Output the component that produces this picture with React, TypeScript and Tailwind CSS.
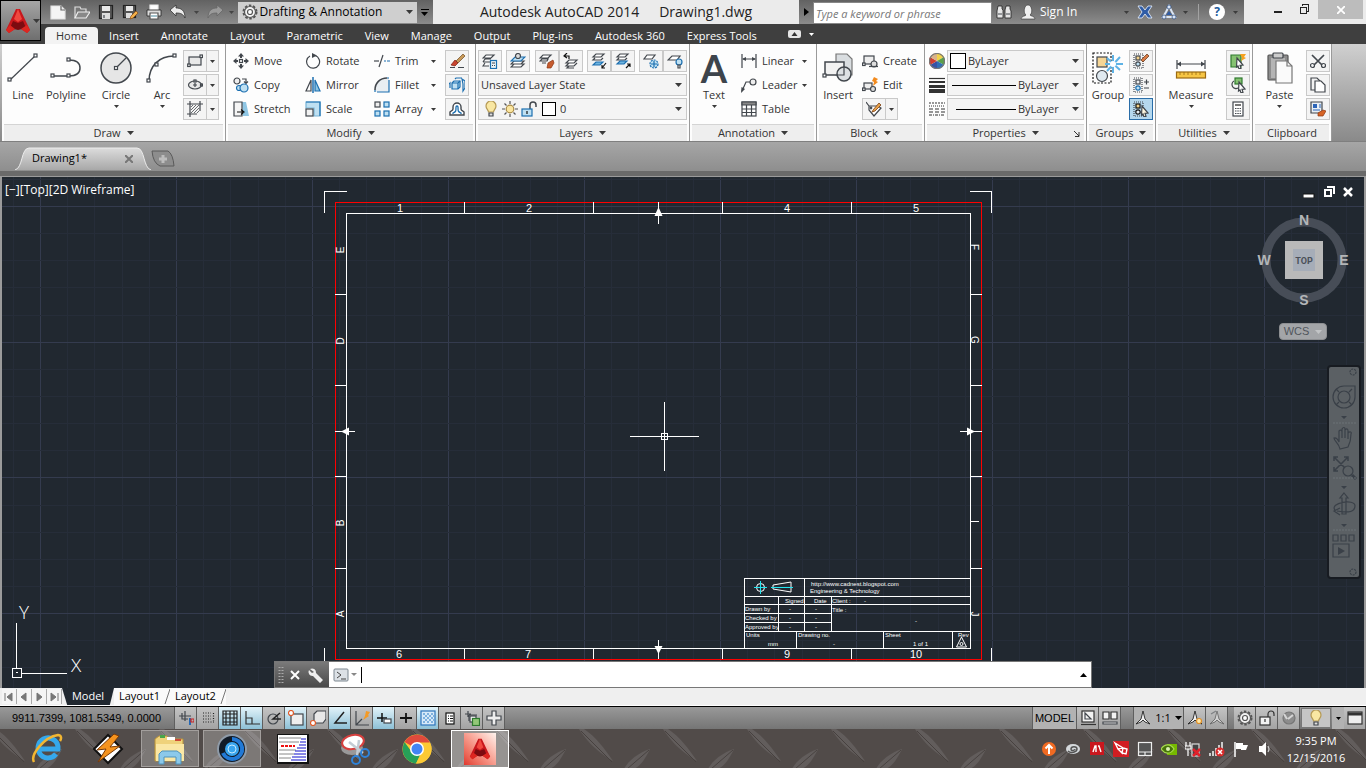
import React from 'react'

type Kids = { children?: React.ReactNode }

// Icon shell: 16 unit grid unless told otherwise
function Ico({ size = 16, box = 16, className = '', children }: Kids & { size?: number; box?: number; className?: string }) {
  return (
    <svg
      width={size}
      height={size}
      viewBox={`0 0 ${box} ${box}`}
      fill="none"
      stroke="#42474d"
      strokeWidth="1.2"
      className={`shrink-0 ${className}`}
      aria-hidden="true"
    >
      {children}
    </svg>
  )
}

function Caret({ className = 'text-[#3a3a3a]', w = 5 }: { className?: string; w?: number }) {
  return (
    <svg width={w} height={w === 5 ? 3 : 4} viewBox="0 0 8 5" preserveAspectRatio="none" className={`shrink-0 ${className}`} aria-hidden="true">
      <path d="M0 0H8L4 5Z" fill="currentColor" />
    </svg>
  )
}

const blue = '#1c6fb0'
const pale = '#bfe0f2'

const icons: Record<string, React.ReactNode> = {
  move: <g stroke="none" fill="#42474d"><path d="M8 0l3 3.500H9V5H7V3.500H5zM8 16l3-3.500H9V11H7v1.500H5zM0 8l3.500-3v2H5v2H3.500v2zM16 8l-3.500-3v2H11v2h1.500v2z" /><rect x="6.500" y="6.500" width="3" height="3" fill="#fff" stroke="#42474d" /></g>,
  copy: <><circle cx="4" cy="4" r="3" fill="#eee" /><path d="M9 2h4v4M11 4.500l2 2 2-2" /><circle cx="6" cy="11" r="2.500" fill={pale} stroke={blue} /><circle cx="11" cy="11" r="4" fill={pale} stroke={blue} /></>,
  stretch: <><path d="M9 1h4l3 14h-6z" fill="#8fc6e4" stroke="none" /><path d="M1 1h8v14H1z" fill="#f5f5f5" /><path d="M4 11h6M8 8.500l3 2.500-3 2.500" stroke="#111" /></>,
  rotate: <><path d="M10 2.500a6.500 6.500 0 1 1-5 .5" /><path d="M7 0l5 2.500L7 5z" fill="#42474d" stroke="none" /></>,
  mirror: <><path d="M6 3v11H1z" /><path d="M8 0v16" stroke={blue} strokeWidth="1.500" /><path d="M10 3v11h5z" fill="#8fc6e4" stroke={blue} /></>,
  scale: <><path d="M1 1h14v14H9V7H1z" fill={pale} stroke="#78b4d6" /><path d="M1 1h14v14" stroke={blue} /><rect x="1" y="8" width="7" height="7" fill="#f2f2f2" /></>,
  trim: <><path d="M0 8h5" /><path d="M10 8h2M13 8h3" stroke={blue} /><path d="M9 2L5 14" /></>,
  fillet: <><path d="M1 15C1 6 6 1 15 1v14z" fill="#e9eef2" stroke="none" /><path d="M1 15V13M15 1h-2M15 3v12H3" stroke={blue} /><path d="M1 13C1 6 6 1 13 1" strokeWidth="1.600" /></>,
  array: <><rect x="1" y="1" width="5" height="5" fill="#eee" /><g stroke={blue} fill={pale}><rect x="10" y="1" width="5" height="5" /><rect x="1" y="10" width="5" height="5" /><rect x="10" y="10" width="5" height="5" /></g></>,
  erase: <><path d="M7 8l7-7 2 2-7 7z" fill="#c89a5a" stroke="#6d4b23" strokeWidth=".7" /><path d="M2 12l4-5 3 3-3 3z" fill="#c8432d" stroke="#7c1f12" strokeWidth=".7" /><path d="M1 14.500h5M9 14.500h6" /></>,
  explode: <g stroke={blue}><path d="M3 6l2-2h6v6l-2 2H3z" fill={pale} /><path d="M3 6h6v6M9 6l2-2M0 7l1-1v5M13 2l3 2v7l-2 3V7zM6 2l1-1h6" fill="none" /></g>,
  offset: <><path d="M1 14v-3c0-1 3-1 3-3V6a4 4 0 0 1 8 0v2c0 2 3 2 3 3v3z" strokeWidth="1.400" fill="#fff" /><path d="M4 13v-1c3-1 3-2 3-6a1 1 0 0 1 2 0c0 4 0 5 3 6v1" stroke={blue} strokeWidth="1.300" /></>,
  rect: <><rect x="2" y="4" width="12" height="8" fill="#e8e8e8" /><rect x="0.700" y="11" width="2.500" height="2.500" fill="#fff" /><rect x="13" y="2" width="2.500" height="2.500" fill="#fff" /></>,
  ellipse: <><ellipse cx="8" cy="8" rx="6.500" ry="4" fill="#e8e8e8" /><path d="M8 6v4M6 8h4" /><rect x="7" y="3" width="2" height="2" fill="#fff" /><rect x="13.500" y="7" width="2" height="2" fill="#fff" /></>,
  hatch: <><path d="M3 0v16M0 3h16M13 0v10M0 13h10" /><path d="M4 6l2-2M4 9l5-5M4 12l8-8M7 12l5-5M10 12l2-2" strokeWidth=".8" /></>,
  layerProps: <><path d="M4 2h8L9 5H1zM3 6h6M1 9h7M3 6L1 9M3 10L1 13h6" fill="#fff" /><rect x="8.500" y="7.500" width="6" height="8" fill="#eaf3f9" stroke={blue} /><path d="M10 10h3M10 12.500h1M12 12.500h1" /></>,
  layerMake: <><path d="M4 8h10l-3 3H1zM4 11h10l-3 3H1z" fill="#fff" /><path d="M5 4h10l-4 4H1z" fill={pale} stroke={blue} /><circle cx="8" cy="3" r="2.500" fill="#ddd" /></>,
  layerMatch: <><path d="M4 2h8L9 5H1zM3 6h6L8 8H1zM3 10h4" fill="#fff" /><path d="M9 10l5-3 1 3-3 5-4 0z" fill="#c65b2e" stroke="#8c3713" strokeWidth=".7" /></>,
  layerPrev: <><path d="M6 7h8l-3 3H3zM6 10l-3 3h8l3-3M6 13l-2 2h7" fill="#fff" /><path d="M1 3h5v3M4 0L1 3l3 2" stroke="#111" /></>,
  layerIso: <><path d="M5 1h8l-3 3H2zM4 5l-2 2h8l2-2" fill="#fff" /><path d="M5 9h7l-3 3H2z" fill="#6fb5e0" stroke={blue} /><path d="M15 10l-4 5M11 12v3h3" stroke="#111" /></>,
  layerUniso: <><path d="M5 1h8l-3 3H2zM4 5l-2 2h8l2-2" fill="#fff" /><path d="M5 8h7l-3 3H2z" fill="#6fb5e0" stroke={blue} /><path d="M11 15l4-4M12 11h3v3" stroke="#111" /></>,
  layerFreeze: <><path d="M4 2h8L9 6H1z" fill="#fff" /><g stroke={blue}><circle cx="11" cy="11" r="4" fill={pale} strokeDasharray="2 1" /><path d="M11 8v6M8 11h6" /></g></>,
  layerOff: <><path d="M5 3h8l-3 4H1z" fill="#fff" /><circle cx="12" cy="9" r="3" fill={pale} stroke={blue} /><path d="M11 12h2v3h-2z" fill="#fff" /></>,
  bulb: <><path d="M5.500 11C5.500 9 3 8 3 5a5 5 0 0 1 10 0c0 3-2.500 4-2.500 6z" fill="#f9e7a2" stroke="#b59a55" /><path d="M6 12h4v3H6z" fill="#ddd" /></>,
  sun: <><g stroke="#555"><path d="M8 0v3M8 13v3M0 8h3M13 8h3M2.500 2.500l2 2M11.500 11.500l2 2M13.500 2.500l-2 2M4.500 11.500l-2 2" /></g><circle cx="8" cy="8" r="3.800" fill="#fbe6a0" stroke="#a98b45" /></>,
  unlock: <><path d="M9 8V4a3 3 0 0 1 6 0v2" strokeWidth="1.500" /><rect x="1" y="8" width="10" height="7" fill={pale} stroke={blue} /><path d="M6 10v3" stroke="#111" /></>,
  linear: <><path d="M1 1v14M15 1v14M2 6h12" /><path d="M1 6l4-2v4zM15 6l-4-2v4z" fill="#42474d" stroke="none" /></>,
  leader: <><path d="M1 14L5 5h4" /><circle cx="12" cy="5" r="3" fill="#eee" /><path d="M0 16l.5-6 3.500 2z" fill="#42474d" stroke="none" /></>,
  table: <><rect x="1" y="1" width="14" height="14" fill="#fff" /><path d="M1 1h14v3H1z" fill="#888" /><path d="M1 8h14M1 11.500h14M5.500 4v11M10.500 4v11" /></>,
  create: <><rect x="2" y="3" width="10" height="8" fill="#eee" /><rect x="0.600" y="10" width="2.500" height="2.500" fill="#fff" /><circle cx="12" cy="11" r="3" fill="#ddd" /><path d="M7 13.500h9" /></>,
  edit: <><rect x="2" y="6" width="8" height="6" fill="#eee" /><rect x="0.600" y="11" width="2.500" height="2.500" fill="#fff" /><circle cx="11" cy="12" r="2.500" fill="#ddd" /><path d="M12 0l4 2-2 2 2 1-5 4 1-4-2-1z" fill="#f28a1d" stroke="none" /></>,
  attr: <><path d="M0 1l3 4h9l3 2-7 8-5-6V5" fill="#fff" /><path d="M7 9l6-7 2 2-6 6-3 1z" fill="#e8a24a" stroke="#7a3c10" strokeWidth=".8" /><circle cx="5" cy="7" r=".8" /></>,
  wheel: <g stroke="none"><path d="M8 8V0a8 8 0 0 1 7 4z" fill="#f0d24a" /><path d="M8 8l7-4a8 8 0 0 1 0 8z" fill="#5aa04b" /><path d="M8 8l7 4a8 8 0 0 1-7 4z" fill="#2f6fb5" /><path d="M8 8v8a8 8 0 0 1-7-4z" fill="#3653a5" /><path d="M8 8l-7 4a8 8 0 0 1 0-8z" fill="#cf3f30" /><path d="M8 8L1 4a8 8 0 0 1 7-4z" fill="#d9b38a" /><circle cx="8" cy="8" r="7.500" stroke="#777" /></g>,
  weights: <g stroke="#333"><path d="M0 1.500h16" /><path d="M0 5h16" strokeWidth="2" /><path d="M0 9.500h16" strokeWidth="3" /><path d="M0 14h16" strokeWidth="4" /></g>,
  ltypes: <g stroke="#333"><path d="M0 2h16" strokeDasharray="2 1" /><path d="M0 5h16" strokeDasharray="1 1" /><path d="M0 8h16M0 11h16" strokeDasharray="4 2" /><path d="M0 14h16" strokeDasharray="3 1 1 1" /></g>,
  ungroup: <><path d="M1 1h9v14H1z" strokeDasharray="1 1" /><rect x="3" y="3" width="4" height="4" fill="#f3d28c" /><circle cx="5" cy="11" r="2.200" fill={pale} /><path d="M8 7l6-6 2 2-6 6z" fill="#d87a45" stroke="#5c3214" strokeWidth=".7" /></>,
  groupEdit: <><path d="M1 1h8v14H1z" strokeDasharray="1 1" /><rect x="3" y="3" width="4" height="4" fill="#eee" /><circle cx="5" cy="11" r="2.200" fill={pale} stroke={blue} /><path d="M11 5h5M13.500 2.500v5M11 11h5" /></>,
  groupSel: <><path d="M1 1h9v14H1z" strokeDasharray="1 1" /><rect x="3" y="3" width="4" height="4" fill="#f3d28c" stroke="#111" /><circle cx="5" cy="11" r="2.200" fill="#e8eef2" stroke="#111" /><path d="M9 5l6 7-3 .3 1 3-2 .7-1-3-1.500 1z" fill="#fff8e0" /></>,
  quickSel: <><path d="M1 2h10v12H1z" fill="#85c171" stroke="#2f7a2f" /><path d="M10 1l6 0-2 3 2 1-5 3 1-3z" fill="#f6a21f" stroke="none" /><path d="M7 5l6 7-3 .3 1 3-2 .7-1-3-1.500 1z" fill="#fff" /></>,
  selectAll: <><rect x="5" y="1" width="7" height="6" fill="#85c171" stroke="#2f7a2f" /><path d="M4 4a4 4 0 1 0 4 7" /><path d="M9 5l6 7-3 .3 1 3-2 .7-1-3-1.500 1z" fill="#fff" /></>,
  calc: <><rect x="3" y="1" width="10" height="14" fill="#fff" /><rect x="5" y="3" width="6" height="2" fill="#777" stroke="none" /><path d="M5 7.500h6M5 10h6M5 12.500h6" strokeDasharray="1.500 .8" /></>,
  cut: <><path d="M2 2l10 10M14 2L4 12" strokeWidth="1.700" /><circle cx="2.500" cy="12.500" r="2" /><circle cx="13.500" cy="12.500" r="2" /></>,
  copyClip: <><path d="M1 1h6l3 3v9H1z" fill="#f2f2f2" /><path d="M5 4h6l4 4v7H5z" fill="#fff" /></>,
  matchProps: <><path d="M1 1h11v11H1z" fill="#e9eff5" /><rect x="3" y="3" width="4" height="4" fill="#2b64b8" stroke="none" /><path d="M9 4h2M9 6h2M3 9h7" stroke="#2b64b8" /><path d="M8 12l5-3 3 1-3 5-5 0z" fill="#d76427" stroke="#8c3713" strokeWidth=".7" /></>,
  qnew: <><path d="M1 2h10l4 4v9H1z" fill="#f4f4f4" stroke="#e2e2e2" /><path d="M11 2v4h4" stroke="#666" /></>,
  qopen: <><path d="M1 14V3h5l1 2h5v3" fill="#777" stroke="#ddd" /><path d="M4 8h12l-4 6H1z" fill="#888" stroke="#eee" /></>,
  qsave: <><rect x="1.500" y="1.500" width="13" height="13" fill="#555" stroke="#222" /><rect x="4" y="2" width="8" height="5" fill="#e8e8e8" stroke="none" /><rect x="4" y="9" width="8" height="6" fill="#ddd" stroke="none" /><path d="M6 11v3" /></>,
  qsaveas: <><rect x="1.500" y="1.500" width="12" height="12" fill="#555" stroke="#222" /><rect x="4" y="2" width="7" height="5" fill="#e8e8e8" stroke="none" /><rect x="4" y="9" width="6" height="5" fill="#ddd" stroke="none" /><path d="M8 15l1-3 5-5 2 2-5 5z" fill="#f2b04a" stroke="#8a4a12" strokeWidth=".7" /></>,
  qprint: <><path d="M4 1h8v5H4z" fill="#fff" stroke="#eee" /><path d="M1 6h14v6H1z" fill="#ddd" stroke="#222" strokeWidth=".8" /><path d="M4 9h8v6H4z" fill="#fff" stroke="#555" /><path d="M5 12h6" stroke="#69a" /></>,
  qundo: <path d="M0 6l6-5v3c5 0 9 2 9 10-2-4-4-5-9-5v3z" fill="#ececec" stroke="#333" strokeWidth=".8" />,
  qredo: <path d="M16 6l-6-5v3C5 4 1 6 1 14c2-4 4-5 9-5v3z" fill="#9a9a9a" stroke="#666" strokeWidth=".8" />,
  gear: <><circle cx="8" cy="8" r="6.500" stroke="#555" strokeWidth="2" strokeDasharray="2.500 1.600" /><circle cx="8" cy="8" r="5.500" fill="#f2f2f2" stroke="#555" /><circle cx="8" cy="8" r="2.500" fill="#fff" stroke="#555" /></>,
}

const iconButton = 'flex h-[22px] w-6 items-center justify-center border border-[#c9c9c9] bg-[#f4f4f4]'

function IconButton({ name, active = false }: { name: string; active?: boolean }) {
  return (
    <button aria-label={name} className={active ? 'flex h-[22px] w-6 items-center justify-center border border-[#2a6da8] bg-[#b5d8ee]' : iconButton}>
      <Ico>{icons[name]}</Ico>
    </button>
  )
}

function SplitButton({ name }: { name: string }) {
  return (
    <div className="flex h-[22px] border border-[#c9c9c9] bg-[#f4f4f4]">
      <button aria-label={name} className="flex w-[23px] items-center justify-center border-r border-[#c9c9c9]"><Ico>{icons[name]}</Ico></button>
      <button aria-label={`${name} options`} className="flex w-[11px] items-center justify-center"><Caret /></button>
    </div>
  )
}

function RowButton({ name, label, caret = false }: { name: string; label: string; caret?: boolean }) {
  return (
    <button className="flex h-6 w-full items-center gap-[5px]">
      <Ico>{icons[name]}</Ico>
      <span>{label}</span>
      {caret && <span className="ml-auto"><Caret /></span>}
    </button>
  )
}

function BigButton({ label, caret = false, width, children }: Kids & { label: string; caret?: boolean; width: string }) {
  return (
    <button className={`flex h-[72px] flex-col items-center ${width}`}>
      <span className="flex h-[38px] items-center">{children}</span>
      <span className="leading-4">{label}</span>
      {caret && <span className="mt-0.5"><Caret /></span>}
    </button>
  )
}

function Panel({ title, width, caret = true, launcher = false, children }: Kids & { title: string; width: string; caret?: boolean; launcher?: boolean }) {
  return (
    <section className={`flex shrink-0 flex-col border-r border-[#9a9a9a] bg-[#fdfdfd] ${width}`}>
      <div className="flex h-20 pt-[5px]">{children}</div>
      <div className="relative mx-0.5 flex h-[17px] items-center justify-center gap-1.5 border-t border-[#d4d4d4] bg-[#eeeeee]">
        <span>{title}</span>
        {caret && <Caret w={7} />}
        {launcher && (
          <button aria-label="Properties palette" className="absolute right-1 top-1.5">
            <svg width="6" height="6" viewBox="0 0 6 6" stroke="#333" fill="none"><path d="M0 0l5 5M5 1v4.500H1" /></svg>
          </button>
        )}
      </div>
    </section>
  )
}

function Combo({ label, value, children }: Kids & { label: string; value: string }) {
  return (
    <div className="relative flex h-[22px] items-center border border-[#c9c9c9] bg-[#f4f4f4] pl-0.5">
      {children}
      <select aria-label={label} className="h-full min-w-0 flex-1 appearance-none bg-transparent outline-none">
        <option>{value}</option>
      </select>
      <span className="pointer-events-none absolute right-1"><Caret w={7} /></span>
    </div>
  )
}

function AutodeskA({ size }: { size: number }) {
  return (
    <svg width={size} height={size} viewBox="0 0 26 26" aria-hidden="true">
      <path d="M11 1h4l10 21-3 3-6-4H10l-6 4-3-3z" fill="#c8171c" />
      <path d="M13 1l4 10-4 3-4-3z" fill="#f0483f" />
      <path d="M8 13l5 2 5-2 3 7-8 2-8-2z" fill="#7c0b10" />
      <path d="M1 22l4-5 5 4-6 4zM25 22l-3-5-6 4 6 4z" fill="#dd2620" />
    </svg>
  )
}

function TitleBar() {
  const quick = ['qnew', 'qopen', 'qsave', 'qsaveas', 'qprint', 'qundo']
  return (
    <header className="flex h-6 bg-[#ebebeb]">
      <div className="flex w-[433px] shrink-0 items-center bg-linear-to-b from-[#626262] to-[#8c8c8c] pl-[50px]">
        {quick.map((name) => (
          <button key={name} aria-label={name.slice(1)} className="w-6">
            <Ico>{icons[name]}</Ico>
          </button>
        ))}
        <Caret className="mr-2 text-[#444]" />
        <button aria-label="Redo"><Ico>{icons.qredo}</Ico></button>
        <Caret className="ml-1.5 mr-1 text-[#444]" />
        <label className="relative flex h-[21px] w-[180px] items-center bg-[#cfcfcf] pl-1 text-xs text-black">
          <Ico>{icons.gear}</Ico>
          <select aria-label="Workspace" className="ml-0.5 min-w-0 flex-1 appearance-none outline-none">
            <option>Drafting &amp; Annotation</option>
          </select>
          <span className="pointer-events-none absolute right-1"><Caret w={7} /></span>
        </label>
        <button aria-label="Customize" className="flex w-4 flex-col items-center gap-0.5">
          <span className="h-px w-2 bg-black" />
          <Caret w={7} className="text-black" />
        </button>
      </div>
      <h1 className="flex flex-1 items-center justify-center gap-5 whitespace-pre text-sm text-[#222]">
        <span>Autodesk AutoCAD 2014</span>
        <span>Drawing1.dwg</span>
      </h1>
      <div className="flex w-[445px] shrink-0 items-center bg-linear-to-b from-[#626262] to-[#8c8c8c] text-white">
        <button aria-label="Expand search" className="flex w-[14px] justify-center"><svg width="5" height="8"><path d="M0 0l5 4-5 4z" fill="#000" /></svg></button>
        <input aria-label="Search" placeholder="Type a keyword or phrase" className="mt-0.5 h-[22px] w-[179px] border border-[#888] bg-white px-0.5 italic outline-none placeholder:text-[#777]" />
        <button aria-label="Find" className="ml-1 w-6">
          <Ico><path d="M2 2h4v3l1 1v8H1V7zM10 2h4v3l1 2v7H9V6z" fill="#e6e6e6" stroke="#222" strokeWidth=".8" /><path d="M2 10h4M10 10h4" /></Ico>
        </button>
        <button className="flex items-center gap-1 text-xs">
          <Ico><path d="M1 15c0-3 5-3 5-4C3 9 4 1 8 1s5 8 2 10c0 1 5 1 5 4z" fill="#f0f0f0" stroke="#333" strokeWidth=".6" /></Ico>
          Sign In
        </button>
        <Caret className="ml-auto text-[#3c3c3c]" />
        <button aria-label="Exchange" className="ml-2"><Ico><path d="M1 2h4l3 4 3-4h4l-4 6 4 6h-4l-3-4-3 4H1l4-6z" fill="#2f5ca6" stroke="#dfe8f5" strokeWidth=".9" /></Ico></button>
        <button aria-label="Stay connected" className="ml-2"><Ico><path d="M8 2l3 6 3 5H2l3-5z" stroke="#dbe6f5" strokeWidth="2" /><path d="M8 7l3 4H5z" fill="#2f5ca6" stroke="none" /><circle cx="8" cy="3" r="2" fill="#dbe6f5" stroke="#27497f" strokeWidth=".7" /><circle cx="3" cy="13" r="2" fill="#dbe6f5" stroke="#27497f" strokeWidth=".7" /><circle cx="13" cy="13" r="2" fill="#dbe6f5" stroke="#27497f" strokeWidth=".7" /></Ico></button>
        <Caret className="ml-1.5 text-[#3c3c3c]" />
        <span className="ml-2.5 h-4 w-px bg-[#a2a2a2]" />
        <button aria-label="Help" className="ml-2.5 flex size-4 items-center justify-center rounded-full bg-white text-xs font-bold text-[#225a9c]">?</button>
        <Caret className="ml-2 mr-1.5 text-[#3c3c3c]" />
      </div>
      <div className="flex w-[122px] shrink-0 items-start justify-end text-[#222]">
        <button aria-label="Minimize" className="mr-[17px] mt-[11px] h-0.5 w-2 bg-[#222]" />
        <button aria-label="Restore" className="mr-[9px] mt-1"><svg width="10" height="10" fill="none" stroke="#222" shapeRendering="crispEdges"><path d="M3 2V.5h6.500V7H8" /><rect x="1" y="3" width="6" height="6" /></svg></button>
        <button aria-label="Close" className="mr-[3px] flex h-[19px] w-[45px] items-center justify-center bg-[#bcbcbc]"><svg width="8" height="8" stroke="#fff" strokeWidth="1.800"><path d="M0 0l8 8M8 0L0 8" /></svg></button>
      </div>
    </header>
  )
}

const tabs = ['Home', 'Insert', 'Annotate', 'Layout', 'Parametric', 'View', 'Manage', 'Output', 'Plug-ins', 'Autodesk 360', 'Express Tools']

function TabBar() {
  return (
    <nav className="flex h-5 items-end bg-[#3f3f3f] pl-[45px] text-white">
      {tabs.map((tab) => (
        <button key={tab} className={tab === 'Home' ? 'h-[17px] rounded-t-sm bg-[#f3f3f3] px-[11px] leading-4 text-[#333]' : 'h-[17px] px-[11px] leading-4'}>
          {tab}
        </button>
      ))}
      <button aria-label="Minimize ribbon" className="mb-1.5 ml-5 flex items-center gap-2">
        <svg width="13" height="8"><rect width="13" height="8" rx="2" fill="#e6e6e6" /><path d="M3.500 6l3-4 3 4z" fill="#333" /></svg>
        <Caret className="text-white" />
      </button>
    </nav>
  )
}

function Ribbon() {
  return (
    <div className="flex h-[98px] border-b border-[#7f7f7f] bg-linear-to-b from-[#d0d0d0] to-[#8a8a8a] pl-0.5 text-[#333]">
      <Panel title="Draw" width="w-[224px]">
        <BigButton label="Line" width="w-[42px]">
          <Ico size={32} box={32}><path d="M3 28L28 4" /><rect x="1" y="26" width="3" height="3" fill="#fff" /><rect x="27" y="2" width="3" height="3" fill="#fff" /></Ico>
        </BigButton>
        <BigButton label="Polyline" width="w-[44px]">
          <Ico size={32} box={32}><path d="M3 24h16c6 0 11-2 11-8s-4-8-11-8" strokeWidth="1.500" /><g fill="#fff"><rect x="1" y="22" width="3" height="3" /><rect x="17" y="22" width="3" height="3" /><rect x="17" y="6" width="3" height="3" /></g></Ico>
        </BigButton>
        <BigButton label="Circle" width="w-[56px]" caret>
          <Ico size={32} box={32}><circle cx="16" cy="16" r="15" fill="#e6e6e6" strokeWidth="1.500" /><path d="M16 16L26 6" /><rect x="14.500" y="14.500" width="3" height="3" fill="#fff" /></Ico>
        </BigButton>
        <BigButton label="Arc" width="w-9" caret>
          <Ico size={32} box={32}><path d="M3 29C3 14 13 4 28 4" strokeWidth="1.500" /><g fill="#fff"><rect x="1" y="27" width="3" height="3" /><rect x="9" y="11" width="3" height="3" /><rect x="27" y="2" width="3" height="3" /></g></Ico>
        </BigButton>
        <div className="ml-[3px] flex flex-col gap-0.5 pt-px">
          <SplitButton name="rect" />
          <SplitButton name="ellipse" />
          <SplitButton name="hatch" />
        </div>
      </Panel>

      <Panel title="Modify" width="w-[250px]">
        <div className="ml-[7px] w-[72px]">
          <RowButton name="move" label="Move" />
          <RowButton name="copy" label="Copy" />
          <RowButton name="stretch" label="Stretch" />
        </div>
        <div className="w-[69px]">
          <RowButton name="rotate" label="Rotate" />
          <RowButton name="mirror" label="Mirror" />
          <RowButton name="scale" label="Scale" />
        </div>
        <div className="w-[62px]">
          <RowButton name="trim" label="Trim" caret />
          <RowButton name="fillet" label="Fillet" caret />
          <RowButton name="array" label="Array" caret />
        </div>
        <div className="ml-[9px] flex flex-col gap-0.5 pt-px">
          <IconButton name="erase" />
          <IconButton name="explode" />
          <IconButton name="offset" />
        </div>
      </Panel>

      <Panel title="Layers" width="w-[214px]">
        <div className="mx-0.5 flex flex-1 flex-col gap-0.5 pt-px">
          <div className="flex justify-between">
            <IconButton name="layerProps" />
            <IconButton name="layerMake" />
            <div className="flex"><IconButton name="layerMatch" /><IconButton name="layerPrev" /></div>
            <div className="flex"><IconButton name="layerIso" /><IconButton name="layerUniso" /></div>
            <div className="flex"><IconButton name="layerFreeze" /><IconButton name="layerOff" /></div>
          </div>
          <Combo label="Layer state" value="Unsaved Layer State" />
          <Combo label="Layer" value="0">
            <span className="mr-1 flex items-center gap-[3px] pl-0.5">
              <Ico>{icons.bulb}</Ico>
              <Ico>{icons.sun}</Ico>
              <Ico>{icons.unlock}</Ico>
              <span className="ml-0.5 size-3.5 border border-black bg-white" />
            </span>
          </Combo>
        </div>
      </Panel>

      <Panel title="Annotation" width="w-[127px]">
        <BigButton label="Text" width="w-[48px]" caret>
          <span className="font-['Lato'] text-[38px] font-bold leading-9 text-[#3d444c]">A</span>
        </BigButton>
        <div className="ml-[3px] w-[66px]">
          <RowButton name="linear" label="Linear" caret />
          <RowButton name="leader" label="Leader" caret />
          <RowButton name="table" label="Table" />
        </div>
      </Panel>

      <Panel title="Block" width="w-[108px]">
        <BigButton label="Insert" width="w-[42px]">
          <Ico size={32} box={32}><path d="M14 2h11l5 5v16H14z" fill="#d9dde0" stroke="#777" /><path d="M3 10h19v13H3z" fill="#f2f2f2" strokeWidth="1.500" /><circle cx="22" cy="22" r="7" fill="#dde1e4" strokeWidth="1.500" /><path d="M22 15v8h-7" /><rect x="1" y="22" width="3" height="3" fill="#fff" /></Ico>
        </BigButton>
        <div className="ml-[3px] w-14">
          <RowButton name="create" label="Create" />
          <RowButton name="edit" label="Edit" />
          <div className="flex pt-px"><SplitButton name="attr" /></div>
        </div>
      </Panel>

      <Panel title="Properties" width="w-[162px]" launcher>
        <div className="ml-1 flex w-[18px] flex-col gap-2 pt-1">
          <Ico>{icons.wheel}</Ico>
          <Ico>{icons.weights}</Ico>
          <Ico>{icons.ltypes}</Ico>
        </div>
        <div className="mr-0.5 flex flex-1 flex-col gap-0.5 pt-px">
          <Combo label="Object color" value="ByLayer"><span className="mr-0.5 size-4 border border-black bg-white" /></Combo>
          <Combo label="Lineweight" value="ByLayer"><span className="mx-0.5 h-px w-16 bg-black" /></Combo>
          <Combo label="Linetype" value="ByLayer"><span className="ml-1.5 mr-0.5 h-px w-[60px] bg-black" /></Combo>
        </div>
      </Panel>

      <Panel title="Groups" width="w-[69px]">
        <BigButton label="Group" width="w-[42px]">
          <Ico size={32} box={32}><path d="M1 1h18v30H1z" stroke="#111" strokeDasharray="2 1.500" /><rect x="5" y="5" width="10" height="10" fill="#f5d595" /><circle cx="10" cy="24" r="5.500" fill="#dfe9f0" /><path d="M21 3v18M13 12h18M15 6l13 12M28 5L15 19" stroke="#5db3e6" strokeWidth="2" /><circle cx="21" cy="12" r="3" fill="#fff" stroke="none" /></Ico>
        </BigButton>
        <div className="flex flex-col gap-0.5 pt-px">
          <IconButton name="ungroup" />
          <IconButton name="groupEdit" />
          <IconButton name="groupSel" active />
        </div>
      </Panel>

      <Panel title="Utilities" width="w-[97px]">
        <BigButton label="Measure" width="w-[70px]" caret>
          <Ico size={32} box={32}><path d="M2 8v9M30 8v9M2 12h28" /><path d="M2 12l4-2.500v5zM30 12l-4-2.500v5z" fill="#42474d" stroke="none" /><rect x="1.500" y="20" width="29" height="6" fill="#f6c544" stroke="#9b6a12" /><path d="M5 20v3M9 20v3M13 20v3M17 20v3M21 20v3M25 20v3" stroke="#9b6a12" strokeWidth=".8" /></Ico>
        </BigButton>
        <div className="flex flex-col gap-0.5 pt-px">
          <IconButton name="quickSel" />
          <IconButton name="selectAll" />
          <IconButton name="calc" />
        </div>
      </Panel>

      <Panel title="Clipboard" width="w-[79px]" caret={false}>
        <BigButton label="Paste" width="w-[53px]" caret>
          <Ico size={32} box={32}><rect x="4" y="3" width="20" height="25" rx="1" fill="#8d8d8d" stroke="#555" /><rect x="7" y="6" width="14" height="20" fill="#b4b4b4" stroke="none" /><rect x="9" y="1" width="10" height="5" rx="1" fill="#ccc" /><path d="M12 9h11l5 5v17H12z" fill="#fafafa" stroke="#777" /><path d="M23 9v5h5" stroke="#777" /></Ico>
        </BigButton>
        <div className="flex flex-col gap-0.5 pt-px">
          <IconButton name="cut" />
          <IconButton name="copyClip" />
          <IconButton name="matchProps" />
        </div>
      </Panel>
    </div>
  )
}

function FileTabs() {
  return (
    <div className="h-[34px] border-b-[5px] border-[#6a6a6a] bg-linear-to-b from-[#a6a6a6] to-[#8e8e8e] pl-[15px] pt-[5px]">
      <div className="flex items-start">
        <div className="relative flex h-[23px] w-[136px] items-center pl-[17px] pr-[18px] text-black">
          <svg className="absolute inset-0 size-full" viewBox="0 0 136 23" preserveAspectRatio="none" aria-hidden="true">
            <defs>
              <linearGradient id="tab" x2="0" y2="1"><stop stopColor="#dcdcdc" /><stop offset="1" stopColor="#a8a8a8" /></linearGradient>
            </defs>
            <path d="M0 23C8 21 6 1 14 1H122C130 1 128 21 136 23" fill="url(#tab)" stroke="#ececec" />
          </svg>
          <a href="#drawing1" className="relative flex-1">Drawing1*</a>
          <button aria-label="Close drawing" className="relative"><svg width="8" height="8" stroke="#777" strokeWidth="2"><path d="M0 0l8 8M8 0L0 8" /></svg></button>
        </div>
        <button aria-label="New drawing" className="mt-[3px]">
          <svg width="24" height="17" fill="none"><path d="M1 1h16q5 3 6 15H9Q2 13 1 1z" fill="#8d8d8d" stroke="#5a5a5a" /><path d="M12 5v8M8 9h8" stroke="#bdbdbd" strokeWidth="3" /></svg>
        </button>
      </div>
    </div>
  )
}

const range = (from: number, to: number) => Array.from({ length: to - from }, (_, i) => from + i)
const minorX = range(-1, 50).map((i) => Math.round(40 + i * 27.2))
const minorY = range(-1, 18).map((i) => Math.round(206 + i * 27.14))

type Note = [number, number, string]
const notes: Note[] = [
  [785, 603, 'Signed'], [814, 603, 'Date'], [832, 603, 'Client :'], [864, 603, '-'],
  [745, 611, 'Drawn by'], [745, 620, 'Checked by'], [745, 629, 'Approved by'], [832, 612, 'Title   :'],
  [789, 611, '-'], [815, 611, '-'], [789, 620, '-'], [815, 620, '-'], [789, 629, '-'], [815, 629, '-'],
  [746, 637, 'Units'], [768, 646, 'mm'], [798, 637, 'Drawing no.'], [833, 646, '-'],
  [885, 637, 'Sheet'], [913, 646, '1 of 1'], [915, 623, '-'], [958, 637, 'Rev'],
]

function DrawingSheet() {
  return (
    <svg className="absolute inset-0 size-full" viewBox="2 177 1362 511" preserveAspectRatio="xMidYMin slice" fontFamily="Liberation Sans, sans-serif" fill="none">
      <g shapeRendering="crispEdges">
        {minorX.map((x, i) => <path key={x} d={`M${x + 0.5} 177V688`} stroke={(i + 4) % 5 === 0 ? '#343b4e' : '#262d39'} />)}
        {minorY.map((y, i) => <path key={y} d={`M0 ${y + 0.5}H1366`} stroke={(i + 4) % 5 === 0 ? '#343b4e' : '#262d39'} />)}

        {/* Sheet borders */}
        <path d="M335.500 202.500H981.500V659.500H335.500Z" stroke="#ff0000" />
        <g stroke="#fff">
          <path d="M346.500 213.500H970.500V648.500H346.500Z" />
          <path d="M324.500 213V191.500H347M970 191.500H991.500V213M324.500 648V662M991.500 648V662" />
          {[464, 593, 722, 851].map((x) => <path key={x} d={`M${x + 0.5} 202v11M${x + 0.5} 648v11`} />)}
          {[294, 385, 476, 568].map((y) => <path key={y} d={`M335 ${y + 0.5}h11M970 ${y + 0.5}h12`} />)}
          <path d="M970 521.500h9M658.500 202v22M658.500 640v19M335 431.500h20M960 431.500h22" />

          {/* Title block */}
          <path d="M744.500 648V578.500H970M744 596.500H970M744 604.500H970M744 613.500H831M744 622.500H831M744 631.500H970" />
          <path d="M804.500 578V631M778.500 596V631M831.500 596V631M796.500 631V648M883.500 631V648M952.500 631V648" />

          {/* Crosshair and UCS axes */}
          <path d="M630 436.500H699M664.500 402V471" />
          <rect x="661.500" y="433.500" width="6" height="6" />
          <path d="M16.500 623V668M21 673.500H67" />
          <rect x="12.500" y="668.500" width="9" height="9" />
          <path d="M16 672.500h2" />
        </g>
      </g>

      <g fill="#fff">
        <path d="M658.500 207l4 9h-8zM658.500 654l4-8h-8zM341 431.500l8-4v8zM975 431.500l-8-4v8z" />
        <g fontSize="11" textAnchor="middle">
          <text x="400" y="212">1</text><text x="529" y="212">2</text><text x="787" y="212">4</text><text x="916" y="212">5</text>
          <text x="399" y="658">6</text><text x="528" y="658">7</text><text x="787" y="658">9</text><text x="916" y="658">10</text>
        </g>
        <g fontSize="10" textAnchor="middle">
          <text transform="translate(344 250) rotate(-90)">E</text>
          <text transform="translate(344 341) rotate(-90)">D</text>
          <text transform="translate(344 523) rotate(-90)">B</text>
          <text transform="translate(344 614) rotate(-90)">A</text>
          <text transform="translate(971 247) rotate(90)">F</text>
          <text transform="translate(971 340) rotate(90)">G</text>
          <text transform="translate(971 614) rotate(90)">J</text>
        </g>
        <g fontSize="6">
          {notes.map(([x, y, label]) => <text key={`${x}-${y}`} x={x} y={y}>{label}</text>)}
          <text x="810" y="593">Engineering &amp; Technology</text>
          <text x="811" y="586">http://www.cadnest.blogspot.com</text>
        </g>
        <g fontSize="19" fontFamily="Open Sans, sans-serif" fontWeight="300">
          <text x="71" y="672">X</text>
          <text x="19" y="619">Y</text>
        </g>
      </g>

      {/* Projection symbol and revision mark */}
      <g stroke="#fff">
        <circle cx="760.500" cy="587.500" r="4" />
        <path d="M773 585l18-3v10l-18-3z" />
        <path d="M961.500 637l5 10h-10z" />
        <circle cx="961.500" cy="644" r="1.500" />
      </g>
      <path d="M754 587.500h13M760.500 581v13M771 587.500h22" stroke="#22e6f0" />
    </svg>
  )
}

function ViewCube() {
  return (
    <svg className="absolute right-[14px] top-9" width="96" height="96" viewBox="1254 213 96 96" fontFamily="Liberation Sans, sans-serif" textAnchor="middle" role="img" aria-label="View cube">
      <circle cx="1304" cy="260" r="38" fill="none" stroke="#474d57" strokeWidth="9" />
      <rect x="1285" y="241" width="38" height="38" fill="#b9b9b9" />
      <rect x="1293" y="249" width="22" height="22" fill="#a6adb8" />
      <text x="1304" y="264" fontSize="9" fontFamily="Roboto, sans-serif" fontWeight="bold" fill="#4b5058">TOP</text>
      <g fontSize="14" fontWeight="bold" fill="#b4b6b8">
        <text x="1304" y="225">N</text><text x="1304" y="305">S</text><text x="1264" y="265">W</text><text x="1344" y="265">E</text>
      </g>
    </svg>
  )
}

function NavBar() {
  return (
    <div className="absolute right-[3px] top-[188px] rounded border-2 border-[#171b21] bg-[#5b6064]">
      <svg width="30" height="210" viewBox="0 0 30 210" fill="none" stroke="#3a4048" strokeWidth="1.200" role="img" aria-label="Navigation bar">
        <circle cx="24" cy="5" r="3" strokeDasharray="2 1" /><circle cx="24" cy="205" r="3" strokeDasharray="2 1" />
        <path d="M15 19h11v11a11 11 0 1 1-11-11z" /><circle cx="15" cy="30" r="6" /><path d="M10 35l-3 3M20 35l3 3M10 25l-3-3M20 25l3-3" />
        <path d="M11 82c-1-6-6-8-6-11 3-1 4 2 5 4V64c2-2 3 0 3 1v6V62c1-2 3-2 3 0v9-8c2-2 3-1 3 1v8-6c2-2 4-1 3 1 0 6-1 9-3 13z" />
        <path d="M5 90l14 14M19 90L5 104M5 94v-4h4M15 90h4v4M5 100v4h4" strokeWidth="1.500" /><circle cx="19" cy="104" r="5" fill="#5b6064" /><path d="M23 108l4 4" strokeWidth="3" />
        <path d="M15 126l4 5h-2v16h-4v-16h-2zM6 143c-6-7 20-12 20-4s-12 6-18 5M11 141l-6 3 6 4" />
        <path d="M4 168h5v6H4zM12 168h5v6h-5zM20 168h5v6h-5zM4 177h16v13H4z" />
        <path d="M9 180l7 4-7 4zM12 49h6l-3 3zM12 119h6l-3 3zM12 157h6l-3 3z" fill="#3a4048" stroke="none" />
        <path d="M4 56h23M4 111h23M4 163h23" stroke="#6d7276" strokeDasharray="2 1" />
      </svg>
    </div>
  )
}

function CommandLine() {
  return (
    <form className="absolute bottom-0 left-[20%] flex h-[27px] w-[60%] items-center border border-[#777] bg-white">
      <div className="flex h-full w-[54px] items-center bg-linear-to-b from-[#7a7a7a] to-[#4a4a4a]">
        <svg width="54" height="24" viewBox="0 0 54 24" fill="none" aria-hidden="true">
          <path d="M4.500 4v17M7.500 4v17" stroke="#aaa" strokeWidth="2" strokeDasharray="1 2" />
          <path d="M16 8l8 8M24 8l-8 8" stroke="#fff" strokeWidth="2" />
          <path d="M35 6a4 4 0 0 1 6 4l7 7-3 3-7-7a4 4 0 0 1-4-6l3 3 2-1z" fill="#eee" />
        </svg>
      </div>
      <svg className="ml-1" width="26" height="16" fill="none" aria-hidden="true">
        <rect x="1" y="2" width="14" height="12" rx="1" fill="#dce1e6" stroke="#7d8790" /><path d="M4 5l4 3-4 3M8 12h5" stroke="#444" /><path d="M18 6h6l-3 3z" fill="#888" />
      </svg>
      <span className="ml-0.5 h-4 w-px bg-black" />
      <input aria-label="Command" className="h-full flex-1 outline-none" />
      <button type="button" aria-label="Command history" className="mr-1"><Caret w={7} className="rotate-180 text-black" /></button>
    </form>
  )
}

function Canvas() {
  return (
    <main className="relative min-h-[511px] flex-1 overflow-hidden border-x-2 border-t border-[#9b9b9b] bg-[#212830]">
      <DrawingSheet />
      <button className="absolute left-[3px] top-[5px] text-xs text-white">[−][Top][2D Wireframe]</button>
      <div className="absolute right-[11px] top-[9px] flex items-center gap-2">
        <button aria-label="Minimize drawing"><svg width="12" height="12"><rect y="8" width="11" height="4" fill="#fff" stroke="#111" /></svg></button>
        <button aria-label="Restore drawing"><svg width="12" height="12" fill="none" stroke="#fff" strokeWidth="2"><path d="M4 1h7v7" /><rect x="2" y="4" width="6" height="6" /></svg></button>
        <button aria-label="Close drawing window"><svg width="10" height="10" stroke="#fff" strokeWidth="2.500"><path d="M1 1l8 8M9 1L1 9" /></svg></button>
      </div>
      <ViewCube />
      <button className="absolute right-[37px] top-[146px] flex h-[17px] w-12 items-center justify-center gap-1.5 rounded border border-[#8d8f92] bg-[#a3a5a8] font-['Liberation_Sans'] text-[#50555c]">
        WCS <Caret w={7} className="text-[#c2c4c6]" />
      </button>
      <NavBar />
      <CommandLine />
    </main>
  )
}

function LayoutTabs() {
  const steps = ['M3 3v8M10 3L5 7l5 4z', 'M9 3L4 7l5 4z', 'M5 3l5 4-5 4z', 'M4 3l5 4-5 4zM11 3v8']
  return (
    <div className="flex h-[18px] items-center border-b border-white bg-[#efefef] pl-0.5 text-black">
      {steps.map((d) => (
        <button key={d} aria-label="Scroll layouts" className="h-[15px] w-[15px] border-r border-[#aaa] bg-[#f5f5f5]">
          <svg width="14" height="14" fill="#777" stroke="#777"><path d={d} /></svg>
        </button>
      ))}
      <a href="#model" className="relative flex h-[17px] w-[52px] items-center justify-center bg-[#212830] text-white [clip-path:polygon(0_0,100%_0,92%_100%,10%_100%)]">Model</a>
      <a href="#layout1" className="flex h-[17px] items-center gap-1 bg-[#fafafa] pl-[5px]">Layout1 <svg width="6" height="15" stroke="#777"><path d="M6 0L1 15" /></svg></a>
      <a href="#layout2" className="flex h-[17px] items-center gap-1 bg-[#fafafa] pl-[5px]">Layout2 <svg width="6" height="15" stroke="#777"><path d="M6 0L1 15" /></svg></a>
    </div>
  )
}

const toggles: { label: string; on?: boolean; art: React.ReactNode }[] = [
  { label: 'Infer constraints', art: <><path d="M1 6h12M7 1v10M4 3v6h6" /><path d="M12 8v7" stroke="#2467b5" strokeWidth="2" /><path d="M13 9h3v3h-3z" stroke="#cc2222" /></> },
  { label: 'Snap', art: <path d="M3 3h8M3 6h8M3 9h8M3 12h11M13.500 3v8" stroke="#222" strokeDasharray="1 1.500" /> },
  { label: 'Grid', on: true, art: <path d="M1 1h14v14H1zM4 1v14M8 1v14M12 1v14M1 4h14M1 8h14M1 12h14" stroke="#222" /> },
  { label: 'Ortho', on: true, art: <path d="M2 1v13h14M2 8h6v6" stroke="#333" /> },
  { label: 'Polar', art: <><circle cx="7" cy="9" r="5" /><path d="M14 3L7 9h8" stroke="#222" strokeWidth="1.500" /></> },
  { label: 'Object snap', on: true, art: <><rect x="3" y="4" width="12" height="11" fill="#eee" /><circle cx="3" cy="3" r="2.500" fill="#fff" stroke="#e05a28" /></> },
  { label: '3D object snap', art: <><path d="M4 4l3-3h9v8l-3 4H4z" fill="#e8e8e8" /><circle cx="3" cy="13" r="2.500" fill="#fff" stroke="#e05a28" /></> },
  { label: 'Object tracking', on: true, art: <path d="M12 2L3 13h12" stroke="#222" strokeWidth="1.500" /> },
  { label: 'Dynamic UCS', art: <><path d="M2 1v14h13M2 15l6-6" /><path d="M12 1l4 1-2 3 1 1-6 4 2-4z" fill="#f59a24" stroke="none" /></> },
  { label: 'Dynamic input', on: true, art: <><path d="M1 8h10M6 3v9" stroke="#111" strokeWidth="1.500" /><rect x="8" y="9" width="7" height="4" fill="#fff" /></> },
  { label: 'Lineweight', art: <path d="M2 8h6M8 3v10M8 8h6" stroke="#111" strokeWidth="1.800" /> },
  { label: 'Transparency', on: true, art: <><rect x="1" y="1" width="14" height="14" fill="#d7e9f8" stroke="#2d75bd" /><path d="M3 4h11M3 8h11M3 12h11" stroke="#7eb1de" strokeWidth="2" strokeDasharray="2 2" /><path d="M5 6h9M5 10h9" stroke="#7eb1de" strokeWidth="2" strokeDasharray="2 2" /></> },
  { label: 'Quick properties', art: <><rect x="4" y="3" width="8" height="11" fill="#fff" stroke="#111" /><path d="M6 6h1M8 6h3M6 8.500h1M8 8.500h3M6 11h1M8 11h3" stroke="#111" /></> },
  { label: 'Selection cycling', art: <><path d="M1 4h6M4 1v6M5 5h8M5 5v6" /><rect x="6" y="6" width="6" height="6" fill="#eee" /><rect x="8.500" y="8.500" width="7" height="7" fill="#93c878" stroke="#2f7a2f" /></> },
  { label: 'Annotation monitor', art: <path d="M6 1h4v5h5v4h-5v5H6v-5H1V6h5z" fill="#eee" /> },
]

const statusButton = 'flex h-[22px] w-[22px] items-center justify-center border-r border-[#5f5f5f] bg-linear-to-b from-[#c4c4c4] to-[#a3a3a3]'
const scaleMark = <path d="M8 1l2 8 5 5-5-2-2-2-2 2-5 2 5-5z" fill="#f0f0f0" stroke="#222" strokeWidth=".9" />

function StatusBar() {
  return (
    <div className="flex h-[23px] border-t border-black bg-linear-to-b from-[#999] to-[#757575] text-black">
      <div className="flex w-[175px] shrink-0 items-center whitespace-nowrap border-r border-[#5f5f5f] pl-3 font-['Liberation_Sans']">9911.7399, 1081.5349, 0.0000</div>
      {toggles.map(({ label, on, art }) => (
        <button key={label} aria-label={label} aria-pressed={!!on} className={on ? 'flex h-[22px] w-[22px] items-center justify-center border-r border-[#5f5f5f] bg-linear-to-b from-[#e2f3f9] to-[#8dc0d6]' : statusButton}>
          <Ico>{art}</Ico>
        </button>
      ))}
      <div className="ml-auto flex">
        <button className="h-[22px] w-[45px] border-x border-[#5f5f5f] bg-[#b2b2b2] font-['Liberation_Sans']">MODEL</button>
        <button aria-label="Layout quick view" className={statusButton}><Ico><rect x="2" y="1" width="12" height="11" fill="#f2f2f2" stroke="#333" /><path d="M5 3v6h6z" /><path d="M1 14.500h15" stroke="#333" /></Ico></button>
        <button aria-label="Drawing quick view" className={statusButton}><Ico><path d="M1 2h6v7H1zM9 2h6v7H9z" fill="#f2f2f2" stroke="#333" /><path d="M1 12h14v2H1z" fill="#ddd" /></Ico></button>
        <button aria-label="Annotation scale" className="ml-3 flex h-[22px] w-[51px] items-center justify-center gap-1 border-x border-[#5f5f5f] bg-[#b2b2b2]"><Ico>{scaleMark}</Ico>1:1<Caret w={7} className="text-black" /></button>
        <button aria-label="Annotation visibility" className={statusButton}><Ico>{scaleMark}<circle cx="12" cy="11" r="2.500" fill="#ffe9a8" stroke="#e0902a" /></Ico></button>
        <button aria-label="Add scales" className={statusButton}><Ico className="opacity-50">{scaleMark}<path d="M2 4l5-3" /></Ico></button>
        <button aria-label="Workspace switching" className={`${statusButton} ml-1.5`}><Ico>{icons.gear}</Ico></button>
        <button aria-label="Lock toolbars" className={statusButton}><Ico><path d="M9 7V4a3 3 0 0 1 6 0v2" stroke="#333" /><rect x="1" y="7" width="10" height="8" fill="#f2f2f2" stroke="#333" /><path d="M6 9v3" stroke="#333" /></Ico></button>
        <button aria-label="Performance" className={statusButton}><Ico><circle cx="8" cy="8" r="6" fill="#8c8c8c" stroke="#777" /><path d="M6 9L3 4M7 9l5-4" stroke="#d5d5d5" strokeWidth="2" /></Ico></button>
        <button aria-label="Isolate objects" className="m-px flex h-5 w-[30px] items-center justify-center border border-[#777] bg-[#c5c5c5]"><Ico>{icons.bulb}</Ico></button>
        <button aria-label="Status bar menu" className="flex w-3 items-center justify-center bg-[#b2b2b2]"><Caret className="text-black" /></button>
        <button aria-label="Clean screen" className={statusButton}><Ico><rect x="1" y="2" width="14" height="12" fill="#eee" stroke="#333" /><path d="M1 4h14" stroke="#333" strokeWidth="3" /></Ico></button>
      </div>
    </div>
  )
}

const tray: { label: string; art: React.ReactNode }[] = [
  { label: 'Updater', art: <><circle cx="8" cy="8" r="7" fill="#f06a22" stroke="none" /><path d="M8 13V4M4.500 7.500L8 4l3.500 3.500" stroke="#fff" strokeWidth="2" /></> },
  { label: 'Sync', art: <><ellipse cx="8" cy="8" rx="7" ry="5" fill="#d5d9dc" stroke="none" /><path d="M3 10c3 3 9 1 9-2s-6-3-6 0 4 1 4 0" stroke="#555" strokeWidth="1.500" /></> },
  { label: 'Adobe', art: <><rect x="1" y="1" width="14" height="13" fill="#c9171e" stroke="none" /><path d="M4 11l2-6h1v6M9 5h1l2 6" stroke="#fff" strokeWidth="1.400" /></> },
  { label: 'Autodesk', art: <><rect width="16" height="16" fill="#d11d22" stroke="none" /><path d="M2 2l8 5-5 1zM5 8l5 5M10 7l4 1-1 5-4-1z" stroke="#fff" strokeWidth="1.400" /></> },
  { label: 'Touchpad', art: <><rect x="1.500" y="1.500" width="13" height="13" fill="#555" stroke="#eee" /><path d="M2 11h12M8 11v4" stroke="#eee" /></> },
  { label: 'Graphics', art: <><path d="M6 3h10v11H6z" fill="#76b900" stroke="none" /><path d="M0 8c4-6 10-5 13 0-4 6-9 5-13 0z" fill="#47730a" stroke="#a8dd4f" /><circle cx="7" cy="8" r="2" fill="#d9f2b3" stroke="none" /></> },
  { label: 'Power', art: <><path d="M1 1v4M5 1v4M0 5h6v3H0zM3 8v7" stroke="#fff" /><rect x="7" y="3" width="7" height="12" fill="#444" stroke="#ddd" /><path d="M8 8l7 7M15 8l-7 7" stroke="#e2202a" strokeWidth="2.500" /></> },
  { label: 'Network', art: <><path d="M1 15v-3M4 15v-5M7 15V7M10 15V4M13 15V1" stroke="#ccc" strokeWidth="2" /><circle cx="11" cy="11" r="4.500" fill="#d92a2a" stroke="none" /><path d="M9 9l4 4M13 9l-4 4" stroke="#fff" strokeWidth="1.500" /></> },
  { label: 'Action center', art: <><path d="M2 1v15" stroke="#fff" strokeWidth="1.500" /><path d="M3 2h7v2h5l-2 5H8V8H3z" fill="#fff" stroke="none" /></> },
  { label: 'Volume', art: <><path d="M2 5h3l4-4v14l-4-4H2z" fill="#fff" stroke="none" /><path d="M11 5q2 3 0 6" stroke="#ccc" /></> },
]

function Taskbar() {
  return (
    <footer className="relative flex h-[39px] items-center overflow-hidden bg-[#514b49] text-white">
      <svg className="absolute inset-0 size-full" aria-hidden="true">
        <defs>
          <pattern id="plate" width="84" height="39" patternUnits="userSpaceOnUse" x="-9">
            <path d="M0 0h5c12 8 20 19 29 32C20 24 9 14 0 0z" fill="#625d5c" />
            <path d="M45 40c4-8 14-16 26-20-5 10-10 18-17 20z" fill="#625d5c" />
            <path d="M2 2l31 31M48 40l22-19" stroke="#47413f" />
          </pattern>
        </defs>
        <rect width="100%" height="100%" fill="url(#plate)" />
      </svg>
      <div className="relative flex items-center pl-[17px]">
        <button aria-label="Internet Explorer" className="flex w-[60px] justify-center">
          <svg width="32" height="32" viewBox="0 0 32 32" fill="none">
            <path d="M25 21a10 10 0 1 1 2-5H9" stroke="#35a8ec" strokeWidth="5" />
            <path d="M3 29C-1 22 13 4 27 2c3 0 4 3 2 6" stroke="#f2b632" strokeWidth="2.500" />
          </svg>
        </button>
        <button aria-label="Winamp" className="flex w-[62px] justify-center">
          <svg width="32" height="32" viewBox="0 0 32 32"><path d="M16 2l14 14-14 14L2 16z" fill="#fff" stroke="#111" strokeWidth="2" /><path d="M22 1L5 17l9-1-8 13L28 13l-10 1 9-11z" fill="#f5931e" stroke="#7b3a05" /></svg>
        </button>
        <button aria-label="File Explorer" className="ml-0.5 flex h-[37px] w-[58px] items-center justify-center border border-[#a39f9d] bg-white/25">
          <svg width="34" height="32" viewBox="0 0 34 32"><path d="M2 28V6l4-3h8l2 3h14v22z" fill="#efd27b" stroke="#b8923a" /><path d="M7 2h5v3H7z" fill="#4aa54a" /><path d="M14 4h8v3h-8z" fill="#fff" /><path d="M22 6h6v2h-6z" fill="#cc4b38" /><path d="M3 11h28v17H3z" fill="#fae7a5" /><path d="M6 31V21l3-3h15l4 3v10h-5v-7H11v7z" fill="#8cc9ea" stroke="#4f93bc" /></svg>
        </button>
        <button aria-label="Media player" className="ml-1 flex h-[37px] w-[58px] items-center justify-center border border-[#a39f9d] bg-white/25">
          <svg width="32" height="32" viewBox="0 0 32 32" fill="none"><circle cx="16" cy="16" r="14" fill="#111a26" stroke="#8f9ba8" strokeWidth="2" /><path d="M16 6a10 10 0 1 1-9 14" stroke="#2179d6" strokeWidth="4" /><circle cx="16" cy="16" r="7" fill="#39a5ee" /><circle cx="16" cy="16" r="4" stroke="#c4e8ff" /></svg>
        </button>
        <button aria-label="Text tool" className="flex w-[64px] justify-center">
          <svg width="32" height="30" viewBox="0 0 32 30"><path d="M0 0h31v29H0z" fill="#fff" stroke="#111" strokeWidth="2" /><path d="M2 4h22M2 8h20M2 16h17M2 20h15M2 24h12" stroke="#888" /><path d="M4 12h14" stroke="#e11" strokeWidth="2" strokeDasharray="3 1" /><path d="M24 5h5M23 8h6M22 11h7M20 14h9M18 17h11M17 20h12M15 23h14M14 26h15" stroke="#11c" /></svg>
        </button>
        <button aria-label="Snipping Tool" className="flex w-[60px] justify-center">
          <svg width="32" height="32" viewBox="0 0 32 32" fill="none"><ellipse cx="13" cy="15" rx="11" ry="7" fill="#999" /><ellipse cx="14" cy="9" rx="11" ry="7" fill="#fff" stroke="#d6403e" strokeWidth="2" transform="rotate(-12 14 9)" /><path d="M10 9l14 11M20 7l-2 16" stroke="#c3ccd4" strokeWidth="2.500" /><circle cx="26" cy="20" r="4" stroke="#2f83d8" strokeWidth="2" /><circle cx="17" cy="27" r="4" stroke="#2f83d8" strokeWidth="2" /></svg>
        </button>
        <button aria-label="Chrome" className="flex w-[64px] justify-center">
          <svg width="30" height="30" viewBox="0 0 30 30"><circle cx="15" cy="15" r="14.500" fill="#fcc934" /><path d="M15 15L2.500 8A14.500 14.500 0 0 1 28 8.500z" fill="#df4a3c" /><path d="M2.500 8A14.500 14.500 0 0 0 14 29.500L20 19 9 17z" fill="#27a058" /><path d="M28 8.500H15v6h6L14 29.500A14.500 14.500 0 0 0 28 8.500z" fill="#fcc934" /><circle cx="15" cy="15" r="7" fill="#fff" /><circle cx="15" cy="15" r="5.500" fill="#4285f4" /></svg>
        </button>
        <button aria-label="AutoCAD 2014" className="ml-0.5 flex h-[38px] w-[58px] items-center justify-center border border-white bg-white/40">
          <span className="flex size-8 items-center justify-center bg-linear-to-tr from-[#e0342c] to-[#fdf3ee]"><AutodeskA size={22} /></span>
        </button>
      </div>
      <div className="relative ml-auto flex items-center gap-2">
        {tray.map(({ label, art }) => (
          <button key={label} aria-label={label}><Ico>{art}</Ico></button>
        ))}
      </div>
      <time dateTime="2016-12-15T21:35" className="relative w-[86px] text-center leading-[17px]">
        9:35 PM<br />12/15/2016
      </time>
      <span className="w-[7px]" />
    </footer>
  )
}

export default function App() {
  return (
    <div className="relative flex min-h-screen w-full flex-col overflow-hidden bg-[#efefef] font-['Open_Sans','Noto_Sans',sans-serif] text-[11px]">
      <TitleBar />
      <button aria-label="Application menu" className="absolute left-0 top-0 flex h-[41px] w-[41px] items-center gap-0.5 border border-black bg-linear-to-b from-[#a5a5a5] to-[#6f6f6f] pl-1">
        <AutodeskA size={26} />
        <Caret w={7} />
      </button>
      <TabBar />
      <Ribbon />
      <FileTabs />
      <Canvas />
      <LayoutTabs />
      <StatusBar />
      <Taskbar />
    </div>
  )
}
